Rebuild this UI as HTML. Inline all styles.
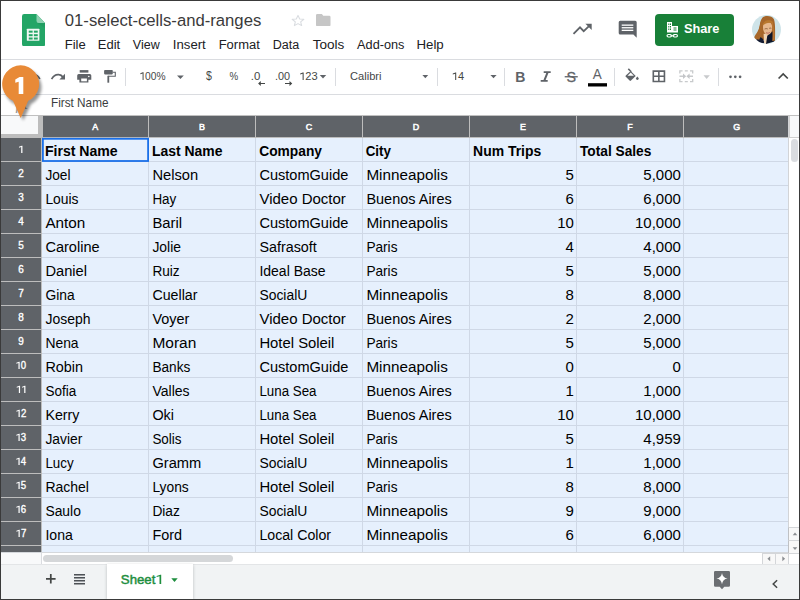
<!DOCTYPE html>
<html><head><meta charset="utf-8">
<style>
html,body{margin:0;padding:0;}
body{width:800px;height:600px;position:relative;overflow:hidden;background:#fff;font-family:"Liberation Sans",sans-serif;color:#202124;}
div,span,svg{position:absolute;box-sizing:border-box;}
svg.txt{font-family:"Liberation Sans",sans-serif;pointer-events:none;}
#frame{left:0;top:0;width:800px;height:600px;border:1px solid #3a3a3a;z-index:50;pointer-events:none;}
.t{white-space:nowrap;line-height:1;transform-origin:0 0;text-rendering:geometricPrecision;}
.hl{left:1px;width:798px;height:1px;background:#dadce0;}
.sep{top:68px;width:1px;height:18px;background:#dadce0;}
.arr{width:0;height:0;border-left:3.5px solid transparent;border-right:3.5px solid transparent;border-top:3.5px solid #5f6368;}
#gridbg{left:42px;top:138px;width:746px;height:414px;background:#e6f0fd;}
.ch{top:116px;height:21px;background:#5f6368;}
.rh{left:1px;width:40px;height:23px;background:#5f6368;}
.vl{top:138px;width:1px;height:414px;background:#cfd8e6;}
.hz{left:42px;width:746px;height:1px;background:#cfd8e6;}
</style></head><body>
<!-- title bar -->
<svg style="left:22px;top:13.900px" width="23.200" height="32.300" viewBox="0 0 24 32" preserveAspectRatio="none">
<path d="M2.2 0H15l9 9v20.8a2.2 2.2 0 0 1-2.2 2.2H2.2A2.2 2.2 0 0 1 0 29.8V2.2A2.2 2.2 0 0 1 2.2 0z" fill="#23a566"/>
<path d="M15 0l9 9h-6.800A2.200 2.200 0 0 1 15 6.800z" fill="#8ed1b1"/>
<path d="M15.500 9h8.500v5z" fill="#1c8f56" opacity=".35"/>
<rect x="5" y="14.5" width="13" height="12" rx=".6" fill="#f1f8f4"/>
<g fill="#23a566"><rect x="7" y="16.5" width="4" height="2"/><rect x="12.3" y="16.5" width="4" height="2"/><rect x="7" y="20" width="4" height="2"/><rect x="12.3" y="20" width="4" height="2"/><rect x="7" y="23.3" width="4" height="2"/><rect x="12.3" y="23.3" width="4" height="2"/></g>
</svg>
<svg style="left:291px;top:14px" width="14" height="13" viewBox="0 0 24 24" preserveAspectRatio="none"><path d="M12 2.500l2.900 6.600 7.100.6-5.400 4.700 1.600 7L12 17.700l-6.200 3.700 1.600-7L2 9.700l7.100-.6z" fill="none" stroke="#dadde1" stroke-width="1.900" stroke-linejoin="round"/></svg>
<svg style="left:316.4px;top:14.1px" width="14.5" height="12.3" viewBox="0 0 16 14" preserveAspectRatio="none"><path d="M1.500 0h5L8 2h6.500A1.500 1.500 0 0 1 16 3.500v9a1.500 1.500 0 0 1-1.500 1.500h-13A1.500 1.500 0 0 1 0 12.500v-11A1.500 1.500 0 0 1 1.500 0z" fill="#c6c6c6"/></svg>
<!-- trend icon -->
<svg style="left:570px;top:20px" width="25" height="18" viewBox="570 20 25 18"><path d="M573.500 33.900l6.500-6.500 3.700 3.800 5.300-5" fill="none" stroke="#5f6368" stroke-width="1.800"/><path d="M585.400 23.700h6.300v6.300z" fill="#5f6368"/></svg>
<!-- comment icon -->
<svg style="left:618px;top:20px" width="20" height="19" viewBox="618 20 20 19"><path d="M620.200 20.700h15a1.500 1.500 0 0 1 1.500 1.500V37.800l-3.300-3.300H620.200a1.500 1.500 0 0 1-1.500-1.500V22.200a1.500 1.500 0 0 1 1.500-1.500z" fill="#5f6368"/><g fill="#fff"><rect x="621.700" y="24.500" width="11.600" height="1.300"/><rect x="621.700" y="27.100" width="11.600" height="1.300"/><rect x="621.700" y="29.700" width="11.600" height="1.300"/></g></svg>
<!-- share -->
<div style="left:655px;top:14px;width:79px;height:32px;border-radius:4px;background:#188038;"></div>
<svg style="left:666px;top:22px" width="13" height="16" viewBox="0 0 13 16"><g fill="#fff"><path d="M1 0h5v4h6v6.500H1z"/><rect x=".5" y="12" width="5.500" height="3.600" rx="1.800"/><rect x="6.500" y="12" width="5.500" height="3.600" rx="1.800"/></g><g fill="#188038"><rect x="2.300" y="1.500" width="1" height="1.500"/><rect x="4" y="1.500" width="1" height="1.500"/><rect x="2.300" y="4" width="1" height="1.500"/><rect x="4" y="4" width="1" height="1.500"/><rect x="2.300" y="6.500" width="1" height="1.500"/><rect x="4" y="6.500" width="1" height="1.500"/><rect x="7.500" y="5.500" width="3" height="1"/><rect x="7.500" y="7.500" width="3" height="1"/><rect x="1.700" y="13.100" width="3.100" height="1.400" rx=".7"/><rect x="7.700" y="13.100" width="3.100" height="1.400" rx=".7"/></g><rect x="4.500" y="13.300" width="4" height="1" fill="#fff"/></svg>
<!-- avatar -->
<svg style="left:752px;top:15px" width="29" height="29" viewBox="0 0 30 30"><defs><clipPath id="av"><circle cx="15" cy="15" r="15"/></clipPath><filter id="avb" x="-5%" y="-5%" width="110%" height="110%"><feGaussianBlur stdDeviation=".45"/></filter></defs><g clip-path="url(#av)"><rect width="30" height="30" fill="#cfe4e9"/><g filter="url(#avb)">
<path d="M10.500 3C13 .3 20.500.3 22.700 4.500c1.500 4 1.300 14 1 22.500L2.500 25c-1.500-2 2.500-5.500 4.500-10.500C8.500 10 8.300 5.500 10.500 3z" fill="#a5652a"/>
<path d="M6 23.500c2.500-1.200 5.500-.5 7 5.500l-6 .5-3-3z" fill="#141a30"/>
<path d="M12 19.500l5 .5-.5 9.500h-4z" fill="#efd3b2"/>
<path d="M15.800 21.500l6-5 1.200 11-8.500 2.500z" fill="#10152a"/>
<path d="M11.800 9.500c1.500-2.500 7.500-3 8.800.5.800 3.500 0 8-2.600 10-2.500 1.500-5-.5-6-3.500-.7-2.500-.9-5-.2-7z" fill="#e6b88e"/>
<path d="M13 14.500c1.500-.6 2.500-.5 3.300 0M17.800 13.800c.8-.4 1.500-.4 2.200 0" stroke="#7a4a2a" stroke-width=".8" fill="none"/>
<path d="M14.500 18.300c1.500.8 3 .6 4-.4" stroke="#b5605a" stroke-width=".9" fill="none"/>
<path d="M10.500 11c.5-4 4-6 8-5.500 2 .3 3 1.500 3.500 3.500-3-1.800-7-1.500-11.500 2z" fill="#b9782f"/>
<path d="M21 6.500c1.800 4 2.300 12 2.200 20l-2.200.5c.5-7 .5-14-1-19z" fill="#b87530"/>
<path d="M10 5c-2 3-1.500 8-3.500 12-1.500 3-3.500 5-4 7.500l5 1c2-3.500 2.500-8 3-12 .3-3 1-5.500 2.500-7z" fill="#a9682b"/>
</g></g></svg>
<div class="hl" style="top:59px"></div>
<!-- toolbar icons: one svg in page coordinates -->
<svg style="left:0;top:60px" width="800" height="35" viewBox="0 60 800 35">
<g fill="#5f6368" stroke="none">
<!-- undo (mostly hidden by marker) -->
<path d="M39.800 79C38.600 76 36 74.500 33 74.800" fill="none" stroke="#5f6368" stroke-width="1.700"/>
<!-- redo -->
<path d="M51.600 79.200C53.500 75.800 56.300 74.300 59 74.700c1.700.2 3 1.200 4 2.400" fill="none" stroke="#5f6368" stroke-width="1.700"/>
<path d="M65 73.800v5.600h-5.600z"/>
<!-- print -->
<rect x="79.700" y="70.100" width="8.700" height="2.500"/>
<path d="M78.700 74.100h11.100a1.500 1.500 0 0 1 1.500 1.500v4.200h-2.900v2.800h-9v-2.800h-2.200v-4.200a1.500 1.500 0 0 1 1.500-1.500z"/>
<rect x="81.200" y="78.500" width="5.700" height="2.800" fill="#fff"/>
<circle cx="88.800" cy="76.500" r=".8" fill="#fff"/>
<!-- paint format -->
<rect x="104.100" y="70.100" width="8.700" height="4.300" rx=".8"/>
<path d="M112.800 72.250h2.500v4.050h-7.200" fill="none" stroke="#5f6368" stroke-width="1.100"/>
<rect x="107.400" y="75.800" width="1.800" height="6.900"/>
</g>
<!-- decimal arrows -->
<g fill="#444746"><path d="M265 83h-4.200v-1.900l-2.700 2.400 2.700 2.400V84h4.200z"/><path d="M285 83h4.500v-1.900l2.750 2.400-2.750 2.400V84H285z"/></g>
<!-- dropdown arrows -->
<g fill="#5f6368"><path d="M177 75.400h6.800l-3.400 3.600z"/><path d="M319.750 75h6.500l-3.250 3.500z"/><path d="M422.400 75.100h5.800l-2.900 3.200z"/><path d="M490.400 75.100h6.200l-3.100 3.200z"/></g>
<path d="M703.500 75.250h6.300l-3.150 3.750z" fill="#c8cacc"/>
<!-- italic I (slab) -->
<g fill="none" stroke="#5f6368" stroke-width="1.800"><path d="M543.700 72.100h7M540.700 80.800h7"/><path d="M547.700 72.100l-3.500 8.700" stroke-width="2"/></g>
<!-- strikethrough line -->
<path d="M564.700 76.750h13.050" stroke="#5f6368" stroke-width="1.300" fill="none"/>
<!-- text color bar -->
<rect x="588" y="83.200" width="19" height="3.300" fill="#000"/>
<!-- fill color -->
<g><path d="M630.700 70.900l5 5-4.700 4.700a1 1 0 0 1-1.400 0l-3.800-3.800a1 1 0 0 1 0-1.400z" fill="#5f6368"/><path d="M630.700 72.600l3.200 3.200h-6.400z" fill="#fff"/><path d="M628.300 68.900l2.900 2.900" stroke="#5f6368" stroke-width="1.500" fill="none"/><path d="M637.350 76.600s1.350 1.300 1.350 2a1.350 1.350 0 0 1-2.700 0c0-.7 1.350-2 1.350-2z" fill="#5f6368"/></g>
<!-- borders -->
<path d="M652.500 70.300h12.750v12h-12.750zM654.100 71.900v3.600h3.950v-3.600zM659.650 71.900v3.600h4v-3.600zM654.100 77.100v3.600h3.950v-3.600zM659.650 77.100v3.600h4v-3.600z" fill="#5f6368" fill-rule="evenodd"/>
<!-- merge (disabled) -->
<g fill="none" stroke="#c8cacc" stroke-width="1.300"><path d="M679.850 73.500v-2.550h2.700M684.800 70.950h3M690 70.950h2.700v2.550M679.850 79.100v2.550h2.700M684.800 81.650h3M690 81.650h2.700V79.100"/><path d="M679.500 76.300h4.300M693 76.300h-4.300" stroke-width="1.500"/></g>
<path d="M683 73.500l3.200 2.800-3.200 2.800zM689.600 73.500l-3.200 2.800 3.200 2.800z" fill="#c4c6c9"/>
<!-- more -->
<g fill="#5f6368"><circle cx="730.500" cy="76.800" r="1.350"/><circle cx="735.300" cy="76.800" r="1.350"/><circle cx="740.100" cy="76.800" r="1.350"/></g>
<!-- chevron up -->
<path d="M778.600 78.500l4.600-4.600 4.600 4.600" fill="none" stroke="#444746" stroke-width="1.700"/>
<!-- separators -->
<g stroke="#dadce0" stroke-width="1"><path d="M125.500 68v18M335.500 68v18M437.500 68v18M504.500 68v18M614.500 68v18M718.500 68v18"/></g>
</svg>
<div class="hl" style="top:94px"></div>
<!-- formula bar -->
<svg class="txt" style="left:0;top:90px" width="60" height="30" viewBox="0 90 60 30"><text x="15.500" y="109" style="font-size:17px;font-style:italic;fill:#9a9a9a;font-family:'Liberation Serif',serif;">fx</text></svg>
<div class="hl" style="top:115px;background:#c0c0c0"></div>
<!-- grid -->
<div style="left:1px;top:116px;width:798px;height:22px;background:#bdbdbd;"></div>
<div style="left:1px;top:116px;width:41px;height:436px;background:#bdbdbd;"></div>
<div style="left:1px;top:116px;width:37px;height:18px;background:#f8f9fa;"></div>
<div id="gridbg"></div>
<div class="ch" style="left:43px;width:105px"></div>
<div class="ch" style="left:149px;width:106px"></div>
<div class="ch" style="left:256px;width:106px"></div>
<div class="ch" style="left:363px;width:106px"></div>
<div class="ch" style="left:470px;width:106px"></div>
<div class="ch" style="left:577px;width:106px"></div>
<div class="ch" style="left:684px;width:105px"></div>
<div class="rh" style="top:138px"></div>
<div class="rh" style="top:162px"></div>
<div class="rh" style="top:186px"></div>
<div class="rh" style="top:210px"></div>
<div class="rh" style="top:234px"></div>
<div class="rh" style="top:258px"></div>
<div class="rh" style="top:282px"></div>
<div class="rh" style="top:306px"></div>
<div class="rh" style="top:330px"></div>
<div class="rh" style="top:354px"></div>
<div class="rh" style="top:378px"></div>
<div class="rh" style="top:402px"></div>
<div class="rh" style="top:426px"></div>
<div class="rh" style="top:450px"></div>
<div class="rh" style="top:474px"></div>
<div class="rh" style="top:498px"></div>
<div class="rh" style="top:522px"></div>
<svg class="txt" style="left:0;top:0" width="800" height="600"><text transform="translate(92.13,130.00) scale(0.9200,1)" style="font-size:9.7px;fill:#fff;stroke:#fff;stroke-width:.55px;">A</text>
<text transform="translate(199.00,130.00) scale(0.9200,1)" style="font-size:9.7px;fill:#fff;stroke:#fff;stroke-width:.55px;">B</text>
<text transform="translate(305.82,130.00) scale(0.9200,1)" style="font-size:9.7px;fill:#fff;stroke:#fff;stroke-width:.55px;">C</text>
<text transform="translate(412.73,130.00) scale(0.9200,1)" style="font-size:9.7px;fill:#fff;stroke:#fff;stroke-width:.55px;">D</text>
<text transform="translate(519.95,130.00) scale(0.9200,1)" style="font-size:9.7px;fill:#fff;stroke:#fff;stroke-width:.55px;">E</text>
<text transform="translate(627.20,130.00) scale(0.9200,1)" style="font-size:9.7px;fill:#fff;stroke:#fff;stroke-width:.55px;">F</text>
<text transform="translate(733.23,130.00) scale(0.9200,1)" style="font-size:9.7px;fill:#fff;stroke:#fff;stroke-width:.55px;">G</text>
<g transform="translate(18.08,153.00) scale(0.9990,1)" style="font-size:10px;fill:#fff;stroke:#fff;stroke-width:.35px;"><path d="M0.437 0V-.716H0.367L.09 -.62V-.53L0.310 -.60V0z" transform="translate(0.00,0) scale(10)" style="stroke:none"/></g>
<text transform="translate(44.88,156.00) scale(0.9655,1)" style="font-size:14.6px;fill:#000;font-weight:bold;">First Name</text>
<text transform="translate(151.89,156.00) scale(0.9566,1)" style="font-size:14.6px;fill:#000;font-weight:bold;">Last Name</text>
<text transform="translate(259.25,156.00) scale(0.9446,1)" style="font-size:14.6px;fill:#000;font-weight:bold;">Company</text>
<text transform="translate(365.66,156.00) scale(0.9170,1)" style="font-size:14.6px;fill:#000;font-weight:bold;">City</text>
<text transform="translate(473.09,156.00) scale(0.9562,1)" style="font-size:14.6px;fill:#000;font-weight:bold;">Num Trips</text>
<text transform="translate(579.96,156.00) scale(0.9394,1)" style="font-size:14.6px;fill:#000;font-weight:bold;">Total Sales</text>
<text transform="translate(18.24,177.00) scale(0.9959,1)" style="font-size:10px;fill:#fff;stroke:#fff;stroke-width:.35px;">2</text>
<text transform="translate(45.40,180.00) scale(0.9141,1)" style="font-size:15px;fill:#000;">Joel</text>
<text transform="translate(152.40,180.00) scale(0.9808,1)" style="font-size:15px;fill:#000;">Nelson</text>
<text transform="translate(259.40,180.00) scale(0.9709,1)" style="font-size:15px;fill:#000;">CustomGuide</text>
<text transform="translate(366.40,180.00) scale(1.0176,1)" style="font-size:15px;fill:#000;">Minneapolis</text>
<text transform="translate(565.55,180.00) scale(1.0007,1)" style="font-size:15px;fill:#000;">5</text>
<text transform="translate(643.34,180.00) scale(1.0007,1)" style="font-size:15px;fill:#000;">5,000</text>
<text transform="translate(18.24,201.00) scale(0.9932,1)" style="font-size:10px;fill:#fff;stroke:#fff;stroke-width:.35px;">3</text>
<text transform="translate(45.40,204.00) scale(0.9257,1)" style="font-size:15px;fill:#000;">Louis</text>
<text transform="translate(152.40,204.00) scale(0.8951,1)" style="font-size:15px;fill:#000;">Hay</text>
<text transform="translate(259.40,204.00) scale(1.0003,1)" style="font-size:15px;fill:#000;">Video Doctor</text>
<text transform="translate(366.40,204.00) scale(0.9659,1)" style="font-size:15px;fill:#000;">Buenos Aires</text>
<text transform="translate(565.55,204.00) scale(1.0007,1)" style="font-size:15px;fill:#000;">6</text>
<text transform="translate(643.34,204.00) scale(1.0007,1)" style="font-size:15px;fill:#000;">6,000</text>
<text transform="translate(18.30,225.00) scale(0.9894,1)" style="font-size:10px;fill:#fff;stroke:#fff;stroke-width:.35px;">4</text>
<text transform="translate(45.40,228.00) scale(1.0190,1)" style="font-size:15px;fill:#000;">Anton</text>
<text transform="translate(152.40,228.00) scale(0.9888,1)" style="font-size:15px;fill:#000;">Baril</text>
<text transform="translate(259.40,228.00) scale(0.9709,1)" style="font-size:15px;fill:#000;">CustomGuide</text>
<text transform="translate(366.40,228.00) scale(1.0176,1)" style="font-size:15px;fill:#000;">Minneapolis</text>
<text transform="translate(557.20,228.00) scale(1.0007,1)" style="font-size:15px;fill:#000;">10</text>
<text transform="translate(634.99,228.00) scale(1.0007,1)" style="font-size:15px;fill:#000;">10,000</text>
<text transform="translate(18.24,249.00) scale(0.9932,1)" style="font-size:10px;fill:#fff;stroke:#fff;stroke-width:.35px;">5</text>
<text transform="translate(45.40,252.00) scale(0.9710,1)" style="font-size:15px;fill:#000;">Caroline</text>
<text transform="translate(152.40,252.00) scale(0.9254,1)" style="font-size:15px;fill:#000;">Jolie</text>
<text transform="translate(259.40,252.00) scale(0.9562,1)" style="font-size:15px;fill:#000;">Safrasoft</text>
<text transform="translate(366.40,252.00) scale(0.9087,1)" style="font-size:15px;fill:#000;">Paris</text>
<text transform="translate(565.55,252.00) scale(1.0007,1)" style="font-size:15px;fill:#000;">4</text>
<text transform="translate(643.34,252.00) scale(1.0007,1)" style="font-size:15px;fill:#000;">4,000</text>
<text transform="translate(18.19,273.00) scale(0.9945,1)" style="font-size:10px;fill:#fff;stroke:#fff;stroke-width:.35px;">6</text>
<text transform="translate(45.40,276.00) scale(0.9795,1)" style="font-size:15px;fill:#000;">Daniel</text>
<text transform="translate(152.40,276.00) scale(0.9094,1)" style="font-size:15px;fill:#000;">Ruiz</text>
<text transform="translate(259.40,276.00) scale(0.9345,1)" style="font-size:15px;fill:#000;">Ideal Base</text>
<text transform="translate(366.40,276.00) scale(0.9087,1)" style="font-size:15px;fill:#000;">Paris</text>
<text transform="translate(565.55,276.00) scale(1.0007,1)" style="font-size:15px;fill:#000;">5</text>
<text transform="translate(643.34,276.00) scale(1.0007,1)" style="font-size:15px;fill:#000;">5,000</text>
<text transform="translate(18.24,297.00) scale(0.9959,1)" style="font-size:10px;fill:#fff;stroke:#fff;stroke-width:.35px;">7</text>
<text transform="translate(45.40,300.00) scale(0.9226,1)" style="font-size:15px;fill:#000;">Gina</text>
<text transform="translate(152.40,300.00) scale(0.9481,1)" style="font-size:15px;fill:#000;">Cuellar</text>
<text transform="translate(259.40,300.00) scale(0.9278,1)" style="font-size:15px;fill:#000;">SocialU</text>
<text transform="translate(366.40,300.00) scale(1.0176,1)" style="font-size:15px;fill:#000;">Minneapolis</text>
<text transform="translate(565.55,300.00) scale(1.0007,1)" style="font-size:15px;fill:#000;">8</text>
<text transform="translate(643.34,300.00) scale(1.0007,1)" style="font-size:15px;fill:#000;">8,000</text>
<text transform="translate(18.22,321.00) scale(0.9938,1)" style="font-size:10px;fill:#fff;stroke:#fff;stroke-width:.35px;">8</text>
<text transform="translate(45.40,324.00) scale(0.9325,1)" style="font-size:15px;fill:#000;">Joseph</text>
<text transform="translate(152.40,324.00) scale(0.9633,1)" style="font-size:15px;fill:#000;">Voyer</text>
<text transform="translate(259.40,324.00) scale(1.0003,1)" style="font-size:15px;fill:#000;">Video Doctor</text>
<text transform="translate(366.40,324.00) scale(0.9659,1)" style="font-size:15px;fill:#000;">Buenos Aires</text>
<text transform="translate(565.55,324.00) scale(1.0007,1)" style="font-size:15px;fill:#000;">2</text>
<text transform="translate(643.34,324.00) scale(1.0007,1)" style="font-size:15px;fill:#000;">2,000</text>
<text transform="translate(18.24,345.00) scale(0.9945,1)" style="font-size:10px;fill:#fff;stroke:#fff;stroke-width:.35px;">9</text>
<text transform="translate(45.40,348.00) scale(0.9261,1)" style="font-size:15px;fill:#000;">Nena</text>
<text transform="translate(152.40,348.00) scale(1.0325,1)" style="font-size:15px;fill:#000;">Moran</text>
<text transform="translate(259.40,348.00) scale(0.9900,1)" style="font-size:15px;fill:#000;">Hotel Soleil</text>
<text transform="translate(366.40,348.00) scale(0.9087,1)" style="font-size:15px;fill:#000;">Paris</text>
<text transform="translate(565.55,348.00) scale(1.0007,1)" style="font-size:15px;fill:#000;">5</text>
<text transform="translate(643.34,348.00) scale(1.0007,1)" style="font-size:15px;fill:#000;">5,000</text>
<g transform="translate(15.48,369.00) scale(0.9600,1)" style="font-size:10px;fill:#fff;stroke:#fff;stroke-width:.35px;"><path d="M0.437 0V-.716H0.367L.09 -.62V-.53L0.310 -.60V0z" transform="translate(0.00,0) scale(10)" style="stroke:none"/><text x="5.56" y="0">0</text></g>
<text transform="translate(45.40,372.00) scale(0.9614,1)" style="font-size:15px;fill:#000;">Robin</text>
<text transform="translate(152.40,372.00) scale(0.9107,1)" style="font-size:15px;fill:#000;">Banks</text>
<text transform="translate(259.40,372.00) scale(0.9709,1)" style="font-size:15px;fill:#000;">CustomGuide</text>
<text transform="translate(366.40,372.00) scale(1.0176,1)" style="font-size:15px;fill:#000;">Minneapolis</text>
<text transform="translate(565.55,372.00) scale(1.0007,1)" style="font-size:15px;fill:#000;">0</text>
<text transform="translate(672.55,372.00) scale(1.0007,1)" style="font-size:15px;fill:#000;">0</text>
<g transform="translate(15.87,393.00) scale(0.9628,1)" style="font-size:10px;fill:#fff;stroke:#fff;stroke-width:.35px;"><path d="M0.437 0V-.716H0.367L.09 -.62V-.53L0.310 -.60V0z" transform="translate(0.00,0) scale(10)" style="stroke:none"/><path d="M0.437 0V-.716H0.367L.09 -.62V-.53L0.310 -.60V0z" transform="translate(5.56,0) scale(10)" style="stroke:none"/></g>
<text transform="translate(45.40,396.00) scale(0.9006,1)" style="font-size:15px;fill:#000;">Sofia</text>
<text transform="translate(152.40,396.00) scale(0.9356,1)" style="font-size:15px;fill:#000;">Valles</text>
<text transform="translate(259.40,396.00) scale(0.8894,1)" style="font-size:15px;fill:#000;">Luna Sea</text>
<text transform="translate(366.40,396.00) scale(0.9659,1)" style="font-size:15px;fill:#000;">Buenos Aires</text>
<text transform="translate(565.55,396.00) scale(1.0007,1)" style="font-size:15px;fill:#000;">1</text>
<text transform="translate(643.34,396.00) scale(1.0007,1)" style="font-size:15px;fill:#000;">1,000</text>
<g transform="translate(15.55,417.00) scale(0.9605,1)" style="font-size:10px;fill:#fff;stroke:#fff;stroke-width:.35px;"><path d="M0.437 0V-.716H0.367L.09 -.62V-.53L0.310 -.60V0z" transform="translate(0.00,0) scale(10)" style="stroke:none"/><text x="5.56" y="0">2</text></g>
<text transform="translate(45.40,420.00) scale(0.9512,1)" style="font-size:15px;fill:#000;">Kerry</text>
<text transform="translate(152.40,420.00) scale(0.9617,1)" style="font-size:15px;fill:#000;">Oki</text>
<text transform="translate(259.40,420.00) scale(0.8894,1)" style="font-size:15px;fill:#000;">Luna Sea</text>
<text transform="translate(366.40,420.00) scale(0.9659,1)" style="font-size:15px;fill:#000;">Buenos Aires</text>
<text transform="translate(557.20,420.00) scale(1.0007,1)" style="font-size:15px;fill:#000;">10</text>
<text transform="translate(634.99,420.00) scale(1.0007,1)" style="font-size:15px;fill:#000;">10,000</text>
<g transform="translate(15.50,441.00) scale(0.9602,1)" style="font-size:10px;fill:#fff;stroke:#fff;stroke-width:.35px;"><path d="M0.437 0V-.716H0.367L.09 -.62V-.53L0.310 -.60V0z" transform="translate(0.00,0) scale(10)" style="stroke:none"/><text x="5.56" y="0">3</text></g>
<text transform="translate(45.40,444.00) scale(0.9233,1)" style="font-size:15px;fill:#000;">Javier</text>
<text transform="translate(152.40,444.00) scale(0.8962,1)" style="font-size:15px;fill:#000;">Solis</text>
<text transform="translate(259.40,444.00) scale(0.9900,1)" style="font-size:15px;fill:#000;">Hotel Soleil</text>
<text transform="translate(366.40,444.00) scale(0.9087,1)" style="font-size:15px;fill:#000;">Paris</text>
<text transform="translate(565.55,444.00) scale(1.0007,1)" style="font-size:15px;fill:#000;">5</text>
<text transform="translate(643.34,444.00) scale(1.0007,1)" style="font-size:15px;fill:#000;">4,959</text>
<g transform="translate(15.46,465.00) scale(0.9599,1)" style="font-size:10px;fill:#fff;stroke:#fff;stroke-width:.35px;"><path d="M0.437 0V-.716H0.367L.09 -.62V-.53L0.310 -.60V0z" transform="translate(0.00,0) scale(10)" style="stroke:none"/><text x="5.56" y="0">4</text></g>
<text transform="translate(45.40,468.00) scale(0.8910,1)" style="font-size:15px;fill:#000;">Lucy</text>
<text transform="translate(152.40,468.00) scale(0.9786,1)" style="font-size:15px;fill:#000;">Gramm</text>
<text transform="translate(259.40,468.00) scale(0.9278,1)" style="font-size:15px;fill:#000;">SocialU</text>
<text transform="translate(366.40,468.00) scale(1.0176,1)" style="font-size:15px;fill:#000;">Minneapolis</text>
<text transform="translate(565.55,468.00) scale(1.0007,1)" style="font-size:15px;fill:#000;">1</text>
<text transform="translate(643.34,468.00) scale(1.0007,1)" style="font-size:15px;fill:#000;">1,000</text>
<g transform="translate(15.50,489.00) scale(0.9602,1)" style="font-size:10px;fill:#fff;stroke:#fff;stroke-width:.35px;"><path d="M0.437 0V-.716H0.367L.09 -.62V-.53L0.310 -.60V0z" transform="translate(0.00,0) scale(10)" style="stroke:none"/><text x="5.56" y="0">5</text></g>
<text transform="translate(45.40,492.00) scale(0.9327,1)" style="font-size:15px;fill:#000;">Rachel</text>
<text transform="translate(152.40,492.00) scale(0.9223,1)" style="font-size:15px;fill:#000;">Lyons</text>
<text transform="translate(259.40,492.00) scale(0.9900,1)" style="font-size:15px;fill:#000;">Hotel Soleil</text>
<text transform="translate(366.40,492.00) scale(0.9087,1)" style="font-size:15px;fill:#000;">Paris</text>
<text transform="translate(565.55,492.00) scale(1.0007,1)" style="font-size:15px;fill:#000;">8</text>
<text transform="translate(643.34,492.00) scale(1.0007,1)" style="font-size:15px;fill:#000;">8,000</text>
<g transform="translate(15.50,513.00) scale(0.9602,1)" style="font-size:10px;fill:#fff;stroke:#fff;stroke-width:.35px;"><path d="M0.437 0V-.716H0.367L.09 -.62V-.53L0.310 -.60V0z" transform="translate(0.00,0) scale(10)" style="stroke:none"/><text x="5.56" y="0">6</text></g>
<text transform="translate(45.40,516.00) scale(0.9251,1)" style="font-size:15px;fill:#000;">Saulo</text>
<text transform="translate(152.40,516.00) scale(0.9162,1)" style="font-size:15px;fill:#000;">Diaz</text>
<text transform="translate(259.40,516.00) scale(0.9278,1)" style="font-size:15px;fill:#000;">SocialU</text>
<text transform="translate(366.40,516.00) scale(1.0176,1)" style="font-size:15px;fill:#000;">Minneapolis</text>
<text transform="translate(565.55,516.00) scale(1.0007,1)" style="font-size:15px;fill:#000;">9</text>
<text transform="translate(643.34,516.00) scale(1.0007,1)" style="font-size:15px;fill:#000;">9,000</text>
<g transform="translate(15.55,537.00) scale(0.9605,1)" style="font-size:10px;fill:#fff;stroke:#fff;stroke-width:.35px;"><path d="M0.437 0V-.716H0.367L.09 -.62V-.53L0.310 -.60V0z" transform="translate(0.00,0) scale(10)" style="stroke:none"/><text x="5.56" y="0">7</text></g>
<text transform="translate(45.40,540.00) scale(0.9392,1)" style="font-size:15px;fill:#000;">Iona</text>
<text transform="translate(152.40,540.00) scale(0.9615,1)" style="font-size:15px;fill:#000;">Ford</text>
<text transform="translate(259.40,540.00) scale(0.9458,1)" style="font-size:15px;fill:#000;">Local Color</text>
<text transform="translate(366.40,540.00) scale(1.0176,1)" style="font-size:15px;fill:#000;">Minneapolis</text>
<text transform="translate(565.55,540.00) scale(1.0007,1)" style="font-size:15px;fill:#000;">6</text>
<text transform="translate(643.34,540.00) scale(1.0007,1)" style="font-size:15px;fill:#000;">6,000</text></svg>
<!-- gridlines -->
<div class="vl" style="left:148px"></div><div class="vl" style="left:255px"></div><div class="vl" style="left:362px"></div><div class="vl" style="left:469px"></div><div class="vl" style="left:576px"></div><div class="vl" style="left:683px"></div>
<div class="hz" style="top:161px"></div><div class="hz" style="top:185px"></div><div class="hz" style="top:209px"></div><div class="hz" style="top:233px"></div><div class="hz" style="top:257px"></div><div class="hz" style="top:281px"></div><div class="hz" style="top:305px"></div><div class="hz" style="top:329px"></div><div class="hz" style="top:353px"></div><div class="hz" style="top:377px"></div><div class="hz" style="top:401px"></div><div class="hz" style="top:425px"></div><div class="hz" style="top:449px"></div><div class="hz" style="top:473px"></div><div class="hz" style="top:497px"></div><div class="hz" style="top:521px"></div><div class="hz" style="top:545px"></div>
<div class="rh" style="top:546px;height:6px"></div>
<svg style="left:40px;top:135px" width="112" height="30" viewBox="40 135 112 30"><rect x="42.900" y="138.800" width="105.200" height="22.200" fill="none" stroke="#1a6fe8" stroke-width="1.800"/></svg>
<!-- scrollbars -->
<div style="left:788px;top:116px;width:11px;height:436px;background:#fff;border-left:1px solid #d2d4d7;"></div>
<div style="left:789px;top:116px;width:10px;height:22px;background:#f8f9fa;border-left:1px solid #d0d0d0;border-bottom:1px solid #d0d0d0;"></div>
<div style="left:791px;top:139px;width:7px;height:23px;border-radius:3.500px;background:#dadce0;"></div>
<div style="left:1px;top:552px;width:798px;height:12px;background:#fff;border-top:1px solid #d5d8dc;"></div>
<div style="left:1px;top:552px;width:41px;height:12px;background:#f8f9fa;border-right:1px solid #dadce0;border-top:1px solid #d5d8dc;"></div>
<div style="left:43px;top:555px;width:190px;height:7px;border-radius:3.500px;background:#d5d7d9;"></div>
<div style="left:788px;top:527px;width:11px;height:14px;background:#f8f8f8;border:1px solid #d4d6d9;border-left-color:#bfc1c4;border-right:none;"></div>
<div style="left:788px;top:540px;width:11px;height:14px;background:#f8f8f8;border:1px solid #d4d6d9;border-left-color:#bfc1c4;border-right:none;"></div>
<div style="left:762px;top:553px;width:14px;height:11px;background:#f8f8f8;border:1px solid #d4d6d9;border-bottom:none;"></div>
<div style="left:775px;top:553px;width:14px;height:11px;background:#f8f8f8;border:1px solid #d4d6d9;border-bottom:none;"></div>
<svg style="left:760px;top:525px" width="40" height="40" viewBox="760 525 40 40"><g fill="#8a8d91"><path d="M792.700 535.200h4.600l-2.300-2.700z"/><path d="M792.700 547.300h4.600l-2.300 2.700z"/><path d="M770.200 556.200v5l-2.800-2.500z"/><path d="M782.300 556.200v5l2.800-2.500z"/></g></svg>
<!-- bottom bar -->
<div style="left:1px;top:564px;width:798px;height:35px;background:#f1f3f4;border-top:1px solid #e3e5e7;"></div>
<div style="left:107px;top:564px;width:86px;height:35px;background:#fff;box-shadow:0 1px 3px rgba(60,64,67,.3);"></div>
<svg style="left:46.400px;top:574.200px" width="9.600" height="9.600" viewBox="0 0 10 10"><path d="M4.100 0h1.800v4.100H10v1.800H5.900V10H4.100V5.900H0V4.100h4.100z" fill="#444746"/></svg>
<svg style="left:73.600px;top:574px" width="11.200" height="10.600" viewBox="0 0 12 11" preserveAspectRatio="none"><g fill="#4d5156"><rect y="0" width="12" height="1.600"/><rect y="3.100" width="12" height="1.600"/><rect y="6.200" width="12" height="1.600"/><rect y="9.300" width="12" height="1.600"/></g></svg>
<svg style="left:171px;top:578px" width="7" height="4" viewBox="0 0 7 4"><path d="M.3.250h6.400L3.500 3.900z" fill="#1e8e3e"/></svg>
<svg style="left:712px;top:569px" width="22" height="24" viewBox="712 569 22 24"><path d="M715.300 571h13.400a1.300 1.300 0 0 1 1.300 1.300v13.200a1.300 1.300 0 0 1-1.300 1.300h-4.400l-2.300 2.500-2.300-2.500h-4.400a1.300 1.300 0 0 1-1.300-1.300v-13.200a1.300 1.300 0 0 1 1.300-1.300z" fill="#6b6e72"/><path d="M722 573c.5 3.300 2.300 5.100 5.600 5.600-3.300.5-5.100 2.300-5.600 5.600-.5-3.300-2.300-5.100-5.600-5.600 3.300-.5 5.100-2.300 5.600-5.600z" fill="#fff"/></svg>
<svg style="left:771px;top:579px" width="8" height="10" viewBox="0 0 8 10"><path d="M6.100 1.200L2.200 5 6.100 8.800" fill="none" stroke="#444746" stroke-width="1.500"/></svg>
<!-- marker -->
<svg style="left:0px;top:60px;overflow:visible;z-index:30" width="50" height="64" viewBox="0 60 50 64"><defs><filter id="sh" x="-30%" y="-30%" width="170%" height="170%"><feGaussianBlur stdDeviation="1.500"/></filter></defs>
<path d="M23.200 120.500L16 104.500A18.500 18.500 0 1 1 31 104z" fill="#000" opacity=".42" filter="url(#sh)"/>
<path d="M20.700 118L13 100.700A18.500 18.500 0 1 1 28.300 100.700z" fill="#e88a37"/>
<path d="M23.300 77V94.100H18.700V81.700L15.300 82.800V79.400L19.600 77z" fill="#fff"/></svg>
<svg class="txt" style="z-index:40;left:0;top:0" width="800" height="600"><text transform="translate(64.83,26.40) scale(1.0052,1)" style="font-size:16.6px;fill:#3a3a3a;">01-select-cells-and-ranges</text>
<text transform="translate(64.75,48.80) scale(0.9677,1)" style="font-size:13.5px;fill:#202124;">File</text>
<text transform="translate(97.86,48.80) scale(0.9605,1)" style="font-size:13.5px;fill:#202124;">Edit</text>
<text transform="translate(132.84,48.80) scale(0.9255,1)" style="font-size:13.5px;fill:#202124;">View</text>
<text transform="translate(172.81,48.80) scale(0.9764,1)" style="font-size:13.5px;fill:#202124;">Insert</text>
<text transform="translate(218.71,48.80) scale(0.9608,1)" style="font-size:13.5px;fill:#202124;">Format</text>
<text transform="translate(272.75,48.80) scale(0.9305,1)" style="font-size:13.5px;fill:#202124;">Data</text>
<text transform="translate(312.63,48.80) scale(1.0039,1)" style="font-size:13.5px;fill:#202124;">Tools</text>
<text transform="translate(357.10,48.80) scale(0.9415,1)" style="font-size:13.5px;fill:#202124;">Add-ons</text>
<text transform="translate(416.44,48.80) scale(0.9838,1)" style="font-size:13.5px;fill:#202124;">Help</text>
<text transform="translate(683.92,33.00) scale(0.9538,1)" style="font-size:13.4px;fill:#fff;font-weight:bold;">Share</text>
<g transform="translate(139.43,80.00) scale(0.9486,1)" style="font-size:10.8px;fill:#444746;"><path d="M0.402 0V-.716H0.332L.09 -.62V-.53L0.310 -.60V0z" transform="translate(0.00,0) scale(10.8)" style="stroke:none"/><text x="6.01" y="0">00%</text></g>
<text transform="translate(205.89,79.90) scale(0.8386,1)" style="font-size:12.6px;fill:#444746;">$</text>
<text transform="translate(229.56,80.00) scale(0.9033,1)" style="font-size:10.8px;fill:#444746;">%</text>
<text transform="translate(250.87,80.00) scale(1.0865,1)" style="font-size:10.5px;fill:#444746;">.0</text>
<text transform="translate(275.02,80.00) scale(1.0352,1)" style="font-size:10.5px;fill:#444746;">.00</text>
<g transform="translate(299.17,80.00) scale(1.0599,1)" style="font-size:10.5px;fill:#444746;"><path d="M0.402 0V-.716H0.332L.09 -.62V-.53L0.310 -.60V0z" transform="translate(0.00,0) scale(10.5)" style="stroke:none"/><text x="5.84" y="0">23</text></g>
<text transform="translate(350.04,80.00) scale(1.0299,1)" style="font-size:10.8px;fill:#444746;">Calibri</text>
<g transform="translate(451.77,80.00) scale(1.0420,1)" style="font-size:10.6px;fill:#444746;"><path d="M0.402 0V-.716H0.332L.09 -.62V-.53L0.310 -.60V0z" transform="translate(0.00,0) scale(10.6)" style="stroke:none"/><text x="5.90" y="0">4</text></g>
<text transform="translate(50.96,106.80) scale(0.8919,1)" style="font-size:13.2px;fill:#3a3d40;">First Name</text>
<g transform="translate(120.80,584.00) scale(1.0190,1)" style="font-size:13px;fill:#1e8e3e;stroke:#1e8e3e;stroke-width:.45px;"><text x="0.00" y="0">Sheet</text><path d="M0.437 0V-.716H0.367L.09 -.62V-.53L0.310 -.60V0z" transform="translate(33.97,0) scale(13)" style="stroke:none"/></g>
<text transform="translate(515.34,82.00) scale(0.9221,1)" style="font-size:15.2px;fill:#5f6368;font-weight:bold;">B</text>
<text transform="translate(592.75,79.00) scale(0.9270,1)" style="font-size:14.6px;fill:#5f6368;">A</text>
<text transform="translate(566.60,82.00) scale(1.0033,1)" style="font-size:14.3px;fill:#5f6368;stroke:#5f6368;stroke-width:.3px;">S</text></svg>
<div id="frame"></div>
</body></html>
